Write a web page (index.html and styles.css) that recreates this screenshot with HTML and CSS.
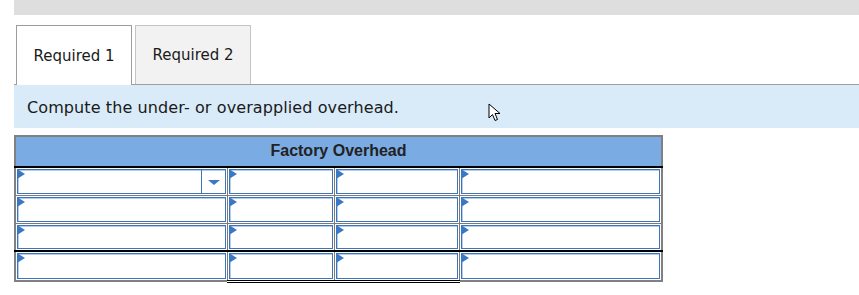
FILE: index.html
```html
<!DOCTYPE html>
<html lang="en">
  <head>
    <meta charset="UTF-8" />
    <meta name="viewport" content="width=device-width, initial-scale=1.0" />
    <title>Required 1</title>
    <link rel="stylesheet" href="styles.css">
  </head>
  <body>
    <div class="top-bar"></div>

    <div class="tabs">
      <div class="tab tab--active">Required 1</div>
      <div class="tab">Required 2</div>
    </div>

    <div class="instruction">
      Compute the under- or overapplied overhead.
      <svg class="cursor" width="14" height="20" viewBox="0 0 14 20">
        <path d="M1 1 L1 15 L4.5 11.5 L7 17.5 L9.5 16.5 L7 10.5 L12 10.5 Z" fill="#fff" stroke="#000" stroke-width="1" />
      </svg>
    </div>

    <table class="account">
      <colgroup>
        <col class="col-a">
        <col class="col-b">
        <col class="col-c">
        <col class="col-d">
      </colgroup>
      <thead>
        <tr>
          <th colspan="4">Factory Overhead</th>
        </tr>
      </thead>
      <tbody>
        <tr>
          <td><div class="field field--select"><span class="flag"></span><span class="drop"></span></div></td>
          <td><div class="field"><span class="flag"></span></div></td>
          <td class="credit"><div class="field"><span class="flag"></span></div></td>
          <td><div class="field"><span class="flag"></span></div></td>
        </tr>
        <tr>
          <td><div class="field"><span class="flag"></span></div></td>
          <td><div class="field"><span class="flag"></span></div></td>
          <td class="credit"><div class="field"><span class="flag"></span></div></td>
          <td><div class="field"><span class="flag"></span></div></td>
        </tr>
        <tr>
          <td><div class="field"><span class="flag"></span></div></td>
          <td><div class="field"><span class="flag"></span></div></td>
          <td class="credit"><div class="field"><span class="flag"></span></div></td>
          <td><div class="field"><span class="flag"></span></div></td>
        </tr>
        <tr class="total">
          <td><div class="field"><span class="flag"></span></div></td>
          <td class="sum"><div class="field"><span class="flag"></span></div></td>
          <td class="credit sum"><div class="field"><span class="flag"></span></div></td>
          <td><div class="field"><span class="flag"></span></div></td>
        </tr>
      </tbody>
    </table>
  </body>
</html>
```

FILE: styles.css
```css
* {
  margin: 0;
  padding: 0;
  box-sizing: border-box;
}

body {
  padding: 0 0 0 14px;
  font-family: "DejaVu Sans", Verdana, sans-serif;
  color: #1a1a1a;
  background: #fff;
}

.top-bar {
  height: 15px;
  background-color: #dedede;
}

.tabs {
  display: flex;
  gap: 3px;
  margin-top: 10px;
  padding-left: 2px;
  border-bottom: 1px solid #a0a0a0;
}

.tab {
  width: 116px;
  height: 59px;
  display: grid;
  justify-content: center;
  align-content: center;
  font-size: 15px;
  background-color: #f2f2f2;
  border: 1px solid #c4c4c4;
  border-bottom: none;
}

.tab--active {
  background-color: #fff;
  border-color: #9c9c9c;
  height: 60px;
  margin-bottom: -1px;
}

.instruction {
  position: relative;
  height: 43px;
  padding: 13px 0 0 13px;
  font-size: 16px;
  letter-spacing: 0.1px;
  background-color: #d9eaf8;
}

.cursor {
  position: absolute;
  left: 474px;
  top: 18px;
}

.account {
  margin-top: 7px;
  width: 647px;
  border-collapse: collapse;
  border: 2px solid #808080;
  table-layout: fixed;
}

.col-a { width: 212px; }
.col-b { width: 107px; }
.col-c { width: 125px; }
.col-d { width: 203px; }

.account th {
  height: 31px;
  font-family: "Liberation Sans", Arial, sans-serif;
  font-size: 16px;
  font-weight: bold;
  color: #222;
  background-color: #7aabe3;
  border-bottom: 2px solid #000;
  padding-bottom: 2px;
}

.account td {
  height: 28px;
  padding: 1px;
  border: 1px solid #7a7a7a;
}

.account td.credit {
  border-left: 1px solid #000;
}

.total td {
  height: 30px;
  border-top: 2px solid #000;
}

.total td.sum {
  border-bottom: 3px double #000;
}

.field {
  position: relative;
  height: 100%;
  background: #fff;
  border: 1px solid #3d74bb;
  box-shadow: inset 1px 1px 0 #b5cdec;
}

.flag {
  position: absolute;
  left: -1px;
  top: -1px;
  width: 0;
  height: 0;
  border-top: 5px solid transparent;
  border-bottom: 5px solid transparent;
  border-left: 8px solid #3b78c4;
}

.drop {
  position: absolute;
  right: 0;
  top: 0;
  bottom: 0;
  width: 24px;
  border-left: 1px solid #3d74bb;
}

.drop::after {
  content: "";
  position: absolute;
  left: 6px;
  top: 10px;
  border-left: 6px solid transparent;
  border-right: 6px solid transparent;
  border-top: 5px solid #3b78c4;
}
```
